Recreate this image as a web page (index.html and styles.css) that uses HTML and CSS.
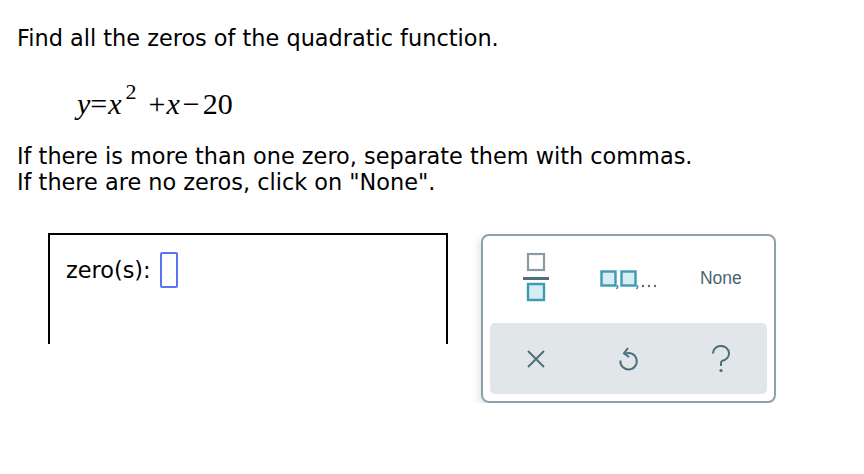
FILE: index.html
```html
<!DOCTYPE html>
<html>
<head>
<meta charset="utf-8">
<link rel="stylesheet" href="styles.css">
</head>
<body>
<div class="page">
  <p class="prompt">Find all the zeros of the quadratic function.</p>
  <div class="math"><i>y</i><span class="eq">=</span><i>x</i><sup>2</sup><span class="plus">+</span><i>x</i><span class="minus">−</span>20</div>
  <p class="note">If there is more than one zero, separate them with commas.<br>If there are no zeros, click on "None".</p>
  <div class="work">
    <div class="answer">
      <span class="label">zero(s):</span><span class="slot"></span>
    </div>
    <div class="keypad">
      <div class="keys">
        <div class="key frac">
          <svg width="30" height="50" viewBox="0 0 30 50">
            <rect x="7" y="2" width="16" height="16" fill="#fff" stroke="#8a9ba3" stroke-width="2.2"/>
            <rect x="2" y="25" width="26" height="3" fill="#546e7a"/>
            <rect x="7" y="32" width="16" height="16" fill="#d5eef4" stroke="#3d9ab3" stroke-width="2.4"/>
          </svg>
        </div>
        <div class="key list">
          <svg width="62" height="22" viewBox="0 0 62 22">
            <rect x="1.5" y="2.5" width="14" height="14" fill="#d5eef4" stroke="#3d9ab3" stroke-width="2.4"/>
            <path d="M17.5 16 v2.5 l-1 1.5" stroke="#3d9ab3" stroke-width="1.6" fill="none"/>
            <rect x="21.5" y="2.5" width="14" height="14" fill="#d5eef4" stroke="#3d9ab3" stroke-width="2.4"/>
            <path d="M37.5 16 v2.5 l-1 1.5" stroke="#3d9ab3" stroke-width="1.6" fill="none"/>
            <circle cx="43" cy="17" r="1.2" fill="#546e7a"/>
            <circle cx="49" cy="17" r="1.2" fill="#546e7a"/>
            <circle cx="55" cy="17" r="1.2" fill="#546e7a"/>
          </svg>
        </div>
        <div class="key none">None</div>
      </div>
      <div class="tools">
        <div class="tool">
          <svg width="20" height="20" viewBox="0 0 20 20"><path d="M2 2 L18 18 M18 2 L2 18" stroke="#4e6e7b" stroke-width="2" fill="none"/></svg>
        </div>
        <div class="tool">
          <svg width="22" height="26" viewBox="0 0 22 26"><path d="M8.5 7.6 A8.2 8.2 0 1 1 3.4 14.5" stroke="#4e6e7b" stroke-width="2" fill="none"/><path d="M11 2 L7 7.4 L12 11" stroke="#4e6e7b" stroke-width="2" fill="none" stroke-linejoin="miter"/></svg>
        </div>
        <div class="tool">
          <svg width="22" height="28" viewBox="0 0 22 28"><path d="M3 8.5 A8 7.5 0 1 1 12.2 15.8 Q11 16.5 11 18 V21" stroke="#4e6e7b" stroke-width="2" fill="none"/><circle cx="11" cy="25.5" r="1.6" fill="#4e6e7b"/></svg>
        </div>
      </div>
    </div>
  </div>
</div>
</body>
</html>
```

FILE: styles.css
```css
html, body {
  margin: 0;
  padding: 0;
  background: #fff;
}
body {
  font-family: "DejaVu Sans", Verdana, sans-serif;
  color: #000;
}
.page {
  padding: 25px 0 0 17px;
}
.prompt {
  margin: 0;
  font-size: 22.4px;
  line-height: 26px;
}
.math {
  margin: 36px 0 0 60px;
  font-family: "Liberation Serif", "Times New Roman", serif;
  font-size: 30px;
  line-height: 34px;
  height: 34px;
}
.math i {
  font-style: italic;
}
.math sup {
  font-size: 22px;
  vertical-align: 0;
  position: relative;
  top: -15px;
  margin: 0 12px 0 4px;
}
.eq {
  margin: 0 1px 0 0;
}
.plus {
  margin: 0 1px 0 0;
}
.minus {
  margin: 0 3px 0 3px;
}
.note {
  margin: 22px 0 0 0;
  font-size: 22.4px;
  line-height: 26px;
}
.work {
  display: flex;
  align-items: flex-start;
  margin-top: 38px;
  margin-left: 31px;
}
.answer {
  box-sizing: border-box;
  width: 400px;
  height: 111px;
  border: 2px solid #000;
  border-bottom: none;
  padding: 17px 0 0 16px;
  display: flex;
  align-items: flex-start;
}
.label {
  font-size: 22.4px;
  line-height: 36px;
}
.slot {
  box-sizing: border-box;
  width: 18px;
  height: 36px;
  margin-left: 9px;
  border: 2px solid #5a73f0;
  border-radius: 2px;
}
.keypad {
  box-sizing: border-box;
  margin-left: 33px;
  margin-top: 1px;
  width: 295px;
  height: 169px;
  border: 2px solid #8ea0a8;
  border-radius: 8px;
  box-shadow: -3px 3px 6px rgba(120,140,150,0.2);
  padding: 0 7px 7px 7px;
  display: flex;
  flex-direction: column;
}
.keys {
  display: grid;
  grid-template-columns: repeat(3, 1fr);
  height: 87px;
  align-items: center;
  justify-items: center;
}
.key {
  display: flex;
  align-items: center;
  justify-content: center;
}
.frac {
  margin-top: -6px;
}
.list {
  margin-left: 6px;
}
.key svg {
  display: block;
}
.none {
  font-family: "Liberation Sans", Arial, sans-serif;
  font-size: 17.5px;
  color: #4a6570;
  margin-top: -3px;
}
.tools {
  flex: 1;
  background: #e1e6e9;
  border-radius: 5px;
  display: grid;
  grid-template-columns: repeat(3, 1fr);
  align-items: center;
  justify-items: center;
}
.tool svg {
  display: block;
}
```
